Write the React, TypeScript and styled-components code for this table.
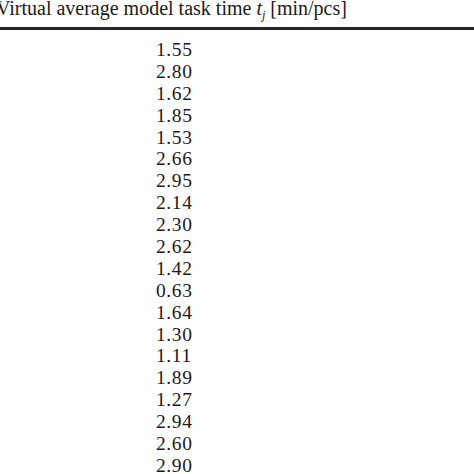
import React from 'react'
import styled, { createGlobalStyle } from 'styled-components'

const GlobalStyle = createGlobalStyle`
  html, body {
    margin: 0;
    padding: 0;
    background: #ffffff;
    overflow: hidden;
  }
`

const Page = styled.div`
  width: 474px;
  height: 474px;
  overflow: hidden;
  font-family: "Liberation Serif", "Times New Roman", serif;
  color: #1a1a1a;
`

const Heading = styled.div`
  font-size: 20px;
  line-height: 16px;
  margin-left: -4px;
  height: 27px;
  white-space: nowrap;
`

const Sub = styled.sub`
  font-size: 12px;
  vertical-align: -4px;
  line-height: 0;
`

const Rule = styled.div`
  height: 2.5px;
  background: #262626;
`

const Values = styled.div`
  display: flex;
  flex-direction: column;
  padding-top: 9.5px;
  padding-left: 156px;
`

const Cell = styled.div`
  font-size: 19.5px;
  letter-spacing: 0.6px;
  line-height: 21.9px;
  height: 21.9px;
`

const times = [
  '1.55', '2.80', '1.62', '1.85', '1.53', '2.66', '2.95', '2.14', '2.30', '2.62',
  '1.42', '0.63', '1.64', '1.30', '1.11', '1.89', '1.27', '2.94', '2.60', '2.90',
]

export default function App() {
  return (
    <Page>
      <GlobalStyle />
      <Heading>
        Virtual average model task time <i>t<Sub>j</Sub></i> [min/pcs]
      </Heading>
      <Rule />
      <Values>
        {times.map((t, i) => (
          <Cell key={i}>{t}</Cell>
        ))}
      </Values>
    </Page>
  )
}
